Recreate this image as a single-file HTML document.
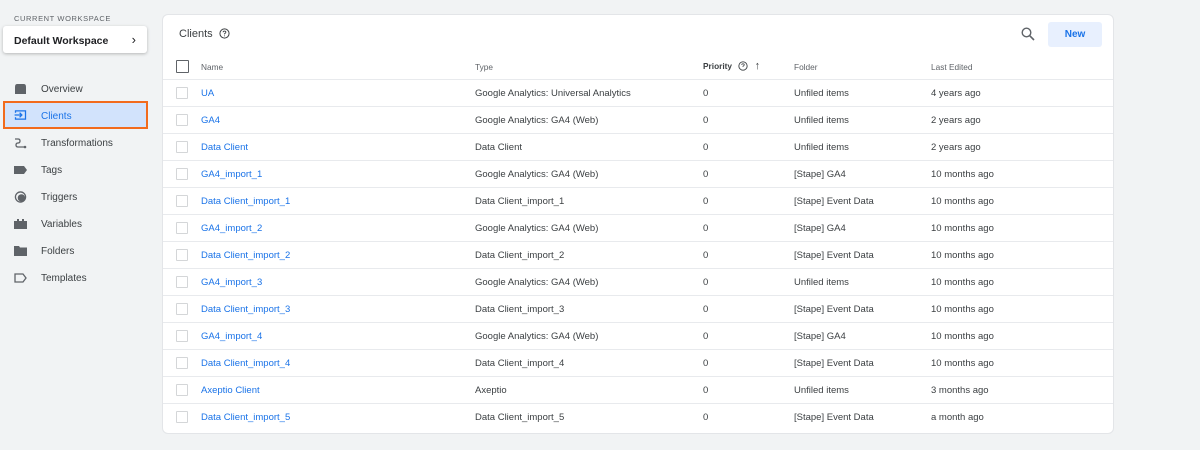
<!DOCTYPE html>
<html><head><style>
*{box-sizing:border-box;margin:0;padding:0}
body{width:1200px;height:450px;background:#f1f3f4;font-family:"Liberation Sans",Arial,sans-serif;position:relative;overflow:hidden;color:#202124}
.ws-label{position:absolute;left:14px;top:14px;font-size:7.5px;letter-spacing:.6px;color:#5f6368}
.ws{position:absolute;left:3px;top:26px;width:144px;height:27px;background:#fff;border-radius:3px;box-shadow:0 1px 3px rgba(0,0,0,.25);font-size:10.5px;font-weight:bold;padding:9px 0 0 11px;color:#202124}
.ws span{position:absolute;right:11px;top:6px;font-size:13px;font-weight:normal}
.nav{position:absolute;left:0;font-size:10px;color:#3c4043;height:27px;width:147px}
.nav .ic{position:absolute;left:14px;top:8px;width:13px;height:10px}
.nav .t{position:absolute;left:41px;top:8px}
.sel{left:3px;width:145px;background:#d2e3fc;border:2px solid #f26b1d;color:#1a73e8}
.sel .ic{left:9px;top:7px}.sel .t{left:36px;top:7px}
.card{position:absolute;left:163px;top:15px;width:950px;height:418px;background:#fff;border-radius:5px;box-shadow:0 0 0 1px #e3e5e8}
.title{position:absolute;left:16px;top:12px;font-size:11px;color:#3c4043}
.new{position:absolute;left:885px;top:7px;width:54px;height:25px;background:#e8f0fe;border-radius:3px;color:#1a73e8;font-size:10px;font-weight:bold;text-align:center;line-height:25px}
.row{position:absolute;left:0;width:950px;height:27px;border-top:1px solid #e8eaed;font-size:9.5px;color:#3c4043}
.row div{position:absolute;top:8px}
.cb{left:13px;top:7px!important;width:12px;height:12px;border:1.5px solid #d4d6d8;border-radius:1px}
.hd{font-size:8.3px;color:#5f6368}
.hd .cb{border:1.5px solid #5f6368;width:13px;height:13px;top:7px!important}
.a{color:#1a73e8}
</style></head><body>
<div class="ws-label">CURRENT WORKSPACE</div>
<div class="ws">Default Workspace<span>›</span></div>

<div class="nav" style="top:76px"><svg class="ic" viewBox="0 0 13 10"><path d="M1 3 Q1 0 3 0 H10 Q12 0 12 3 V10 H1Z" fill="#5f6368"/></svg><div class="t">Overview</div></div>
<div class="nav sel" style="top:101px;height:28px"><svg class="ic" viewBox="0 0 13 11"><path d="M1 3V1H12V10H1V8M0 5.5H8M5.5 3L8 5.5 5.5 8" fill="none" stroke="#1a73e8" stroke-width="1.4"/></svg><div class="t" style="top:8px">Clients</div></div>
<div class="nav" style="top:130px"><svg class="ic" viewBox="0 0 13 11" style="height:11px"><path d="M1 1H4Q6 1 6 3T4 5H4Q2 5 2 7T4 9H11" fill="none" stroke="#5f6368" stroke-width="1.3"/><circle cx="11" cy="9" r="1.3" fill="#5f6368"/></svg><div class="t">Transformations</div></div>
<div class="nav" style="top:157px"><svg class="ic" viewBox="0 0 13 10"><path d="M0 1H10L13 5 10 9H0Z" fill="#5f6368"/></svg><div class="t">Tags</div></div>
<div class="nav" style="top:184px"><svg class="ic" viewBox="0 0 13 13" style="height:12px;top:7px"><circle cx="6.5" cy="6.5" r="5.5" fill="none" stroke="#5f6368" stroke-width="1.4"/><circle cx="7.5" cy="7.5" r="4" fill="#5f6368"/></svg><div class="t">Triggers</div></div>
<div class="nav" style="top:211px"><svg class="ic" viewBox="0 0 13 10"><path d="M0 2H3V0H5V2H8V0H10V2H13V10H0Z" fill="#5f6368"/></svg><div class="t">Variables</div></div>
<div class="nav" style="top:238px"><svg class="ic" viewBox="0 0 13 10"><path d="M0 0H5L6 1.5H13V10H0Z" fill="#5f6368"/></svg><div class="t">Folders</div></div>
<div class="nav" style="top:265px"><svg class="ic" viewBox="0 0 13 10"><path d="M1 1H9L12 5 9 9H1Z" fill="none" stroke="#5f6368" stroke-width="1.3"/></svg><div class="t">Templates</div></div>

<div class="card">
<div class="title" style="top:13px">Clients <svg width="11" height="11" viewBox="0 0 12 12" style="vertical-align:-2px;margin-left:3px"><circle cx="6" cy="6" r="5" fill="none" stroke="#3c4043" stroke-width="1.1"/><path d="M4.5 4.7Q4.5 3.3 6 3.3T7.5 4.7Q7.5 5.5 6 6.3V7" fill="none" stroke="#3c4043" stroke-width="1"/><circle cx="6" cy="8.6" r=".6" fill="#3c4043"/></svg></div>
<svg style="position:absolute;left:858px;top:12px" width="14" height="14" viewBox="0 0 14 14"><circle cx="5.5" cy="5.5" r="4.3" fill="none" stroke="#5f6368" stroke-width="1.4"/><path d="M8.7 8.7L13 13" stroke="#5f6368" stroke-width="1.6"/></svg>
<div class="new" style="top:7px">New</div>
<div class="row hd" style="top:38px;border-top:none"><div class="cb"></div><div style="left:38px;top:9px">Name</div><div style="left:312px;top:9px">Type</div><div style="left:540px;top:7px;font-weight:bold;color:#3c4043">Priority <svg width="10" height="10" viewBox="0 0 12 12" style="vertical-align:-2px;margin-left:4px"><circle cx="6" cy="6" r="5" fill="none" stroke="#3c4043" stroke-width="1.1"/><path d="M4.5 4.7Q4.5 3.3 6 3.3T7.5 4.7Q7.5 5.5 6 6.3V7" fill="none" stroke="#3c4043"/></svg> <span style="font-weight:normal;font-size:11px;margin-left:4px">↑</span></div><div style="left:631px;top:9px">Folder</div><div style="left:768px;top:9px">Last Edited</div></div>
<div class="row" style="top:64px"><div class="cb"></div><div class="a" style="left:38px">UA</div><div style="left:312px">Google Analytics: Universal Analytics</div><div style="left:540px">0</div><div style="left:631px">Unfiled items</div><div style="left:768px">4 years ago</div></div>
<div class="row" style="top:91px"><div class="cb"></div><div class="a" style="left:38px">GA4</div><div style="left:312px">Google Analytics: GA4 (Web)</div><div style="left:540px">0</div><div style="left:631px">Unfiled items</div><div style="left:768px">2 years ago</div></div>
<div class="row" style="top:118px"><div class="cb"></div><div class="a" style="left:38px">Data Client</div><div style="left:312px">Data Client</div><div style="left:540px">0</div><div style="left:631px">Unfiled items</div><div style="left:768px">2 years ago</div></div>
<div class="row" style="top:145px"><div class="cb"></div><div class="a" style="left:38px">GA4_import_1</div><div style="left:312px">Google Analytics: GA4 (Web)</div><div style="left:540px">0</div><div style="left:631px">[Stape] GA4</div><div style="left:768px">10 months ago</div></div>
<div class="row" style="top:172px"><div class="cb"></div><div class="a" style="left:38px">Data Client_import_1</div><div style="left:312px">Data Client_import_1</div><div style="left:540px">0</div><div style="left:631px">[Stape] Event Data</div><div style="left:768px">10 months ago</div></div>
<div class="row" style="top:199px"><div class="cb"></div><div class="a" style="left:38px">GA4_import_2</div><div style="left:312px">Google Analytics: GA4 (Web)</div><div style="left:540px">0</div><div style="left:631px">[Stape] GA4</div><div style="left:768px">10 months ago</div></div>
<div class="row" style="top:226px"><div class="cb"></div><div class="a" style="left:38px">Data Client_import_2</div><div style="left:312px">Data Client_import_2</div><div style="left:540px">0</div><div style="left:631px">[Stape] Event Data</div><div style="left:768px">10 months ago</div></div>
<div class="row" style="top:253px"><div class="cb"></div><div class="a" style="left:38px">GA4_import_3</div><div style="left:312px">Google Analytics: GA4 (Web)</div><div style="left:540px">0</div><div style="left:631px">Unfiled items</div><div style="left:768px">10 months ago</div></div>
<div class="row" style="top:280px"><div class="cb"></div><div class="a" style="left:38px">Data Client_import_3</div><div style="left:312px">Data Client_import_3</div><div style="left:540px">0</div><div style="left:631px">[Stape] Event Data</div><div style="left:768px">10 months ago</div></div>
<div class="row" style="top:307px"><div class="cb"></div><div class="a" style="left:38px">GA4_import_4</div><div style="left:312px">Google Analytics: GA4 (Web)</div><div style="left:540px">0</div><div style="left:631px">[Stape] GA4</div><div style="left:768px">10 months ago</div></div>
<div class="row" style="top:334px"><div class="cb"></div><div class="a" style="left:38px">Data Client_import_4</div><div style="left:312px">Data Client_import_4</div><div style="left:540px">0</div><div style="left:631px">[Stape] Event Data</div><div style="left:768px">10 months ago</div></div>
<div class="row" style="top:361px"><div class="cb"></div><div class="a" style="left:38px">Axeptio Client</div><div style="left:312px">Axeptio</div><div style="left:540px">0</div><div style="left:631px">Unfiled items</div><div style="left:768px">3 months ago</div></div>
<div class="row" style="top:388px"><div class="cb"></div><div class="a" style="left:38px">Data Client_import_5</div><div style="left:312px">Data Client_import_5</div><div style="left:540px">0</div><div style="left:631px">[Stape] Event Data</div><div style="left:768px">a month ago</div></div>
</div>
</body></html>
